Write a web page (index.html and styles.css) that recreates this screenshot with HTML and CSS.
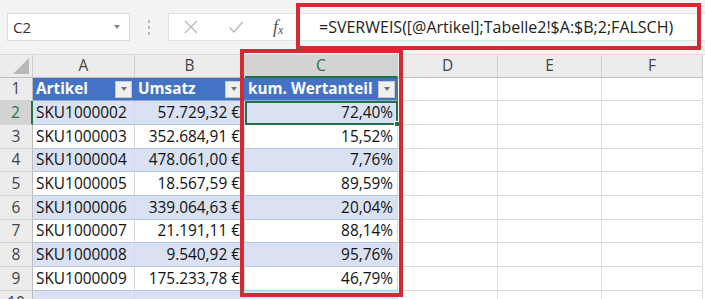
FILE: index.html
```html
<!DOCTYPE html>
<html lang="de">
<head>
<meta charset="utf-8">
<title>SVERWEIS</title>
<link rel="stylesheet" href="styles.css">
</head>
<body>
<div class="app">
  <div class="toolbar">
    <div class="namebox"><span class="nb-text">C2</span><span class="nb-arrow"></span></div>
    <div class="dots"><i></i><i></i><i></i></div>
    <div class="fbar">
      <div class="fbtns">
        <svg class="ico" width="16" height="16" viewBox="0 0 16 16"><path d="M2 2 L14 14 M14 2 L2 14" stroke="#b9b9b9" stroke-width="1.4" fill="none"/></svg>
        <svg class="ico" width="16" height="16" viewBox="0 0 16 16"><path d="M1.5 8.5 L6 13 L14.5 3" stroke="#b9b9b9" stroke-width="1.4" fill="none"/></svg>
        <span class="fx">f<span class="fx-x">x</span></span>
      </div>
      <div class="formula">=SVERWEIS([@Artikel];Tabelle2!$A:$B;2;FALSCH)</div>
    </div>
  </div>

  <div class="sheet">
    <div class="corner"><span class="tri"></span></div>
    <div class="ch">A</div><div class="ch">B</div><div class="ch sel">C</div><div class="ch">D</div><div class="ch">E</div><div class="ch">F</div>

    <div class="rh">1</div>
    <div class="th"><span>Artikel</span><span class="fbtn"></span></div>
    <div class="th"><span>Umsatz</span><span class="fbtn"></span></div>
    <div class="th thc"><span>kum. Wertanteil</span><span class="fbtn"></span></div>
    <div class="c"></div><div class="c"></div><div class="c"></div>

    <div class="rh sel">2</div>
    <div class="t b">SKU1000002</div><div class="t b num">57.729,32 €</div><div class="t b num active">72,40%<span class="handle"></span></div>
    <div class="c"></div><div class="c"></div><div class="c"></div>

    <div class="rh">3</div>
    <div class="t">SKU1000003</div><div class="t num">352.684,91 €</div><div class="t num">15,52%</div>
    <div class="c"></div><div class="c"></div><div class="c"></div>

    <div class="rh">4</div>
    <div class="t b">SKU1000004</div><div class="t b num">478.061,00 €</div><div class="t b num">7,76%</div>
    <div class="c"></div><div class="c"></div><div class="c"></div>

    <div class="rh">5</div>
    <div class="t">SKU1000005</div><div class="t num">18.567,59 €</div><div class="t num">89,59%</div>
    <div class="c"></div><div class="c"></div><div class="c"></div>

    <div class="rh">6</div>
    <div class="t b">SKU1000006</div><div class="t b num">339.064,63 €</div><div class="t b num">20,04%</div>
    <div class="c"></div><div class="c"></div><div class="c"></div>

    <div class="rh">7</div>
    <div class="t">SKU1000007</div><div class="t num">21.191,11 €</div><div class="t num">88,14%</div>
    <div class="c"></div><div class="c"></div><div class="c"></div>

    <div class="rh">8</div>
    <div class="t b">SKU1000008</div><div class="t b num">9.540,92 €</div><div class="t b num">95,76%</div>
    <div class="c"></div><div class="c"></div><div class="c"></div>

    <div class="rh">9</div>
    <div class="t">SKU1000009</div><div class="t num">175.233,78 €</div><div class="t num">46,79%</div>
    <div class="c"></div><div class="c"></div><div class="c"></div>

    <div class="rh">10</div>
    <div class="t b"></div><div class="t b"></div><div class="t b"></div>
    <div class="c"></div><div class="c"></div><div class="c"></div>
  </div>

  <div class="hl hl-formula"></div>
  <div class="hl hl-col"></div>
</div>
</body>
</html>
```

FILE: styles.css
```css
* { box-sizing: border-box; }
html, body { margin: 0; padding: 0; background: #fff; }
.app {
  position: relative;
  width: 705px;
  height: 299px;
  overflow: hidden;
  font-family: "Open Sans", "Noto Sans", sans-serif;
}

/* toolbar */
.toolbar {
  height: 55px;
  background: #f3f3f3;
  border-bottom: 1px solid #dcdcdc;
  display: flex;
  align-items: center;
  padding-left: 7px;
}
.namebox {
  width: 123px;
  height: 28px;
  background: #fff;
  border: 1px solid #dadada;
  display: flex;
  align-items: center;
  justify-content: space-between;
  padding: 0 9px 0 5px;
}
.nb-text { font-size: 15px; color: #333; }
.nb-arrow {
  width: 0; height: 0;
  border-left: 3.5px solid transparent;
  border-right: 3.5px solid transparent;
  border-top: 4px solid #8a8a8a;
}
.dots {
  width: 38px;
  display: flex;
  flex-direction: column;
  align-items: center;
  gap: 3px;
}
.dots i { display: block; width: 2px; height: 3px; background: #bdbdbd; }
.fbar {
  flex: 1;
  height: 28px;
  background: #fff;
  border: 1px solid #e2e2e2;
  border-right: none;
  display: flex;
  align-items: center;
}
.fbtns {
  width: 128px;
  display: flex;
  align-items: center;
  padding-left: 14px;
  gap: 29px;
}
.ico { display: block; }
.fx {
  font-family: "Liberation Serif", serif;
  font-style: italic;
  font-size: 18px;
  color: #555;
  line-height: 1;
}
.fx-x { font-size: 12px; position: relative; top: 1px; }
.formula {
  padding-left: 22px;
  font-size: 16px;
  color: #222;
  white-space: nowrap;
}

/* sheet */
.sheet {
  display: grid;
  grid-template-columns: 33px 102px 110px 153px 100px 104px 101px;
  grid-template-rows: 23px 23px 24px 24px 23px 24px 24px 23px 24px 24px 24px;
}
.sheet > div {
  border-right: 1px solid #dadada;
  border-bottom: 1px solid #dadada;
  font-size: 15px;
  line-height: 1;
  white-space: nowrap;
  display: flex;
  align-items: center;
  min-width: 0;
}
.sheet > .corner {
  background: #ececec;
  border-right: 1px solid #cfcfcf;
  border-bottom: 1px solid #bdbdbd;
  justify-content: flex-end;
  align-items: flex-end;
  padding: 0 3px 3px 0;
}
.tri {
  width: 0; height: 0;
  border-left: 16px solid transparent;
  border-bottom: 16px solid #b8b8b8;
}
.sheet > .ch {
  background: #ececec;
  border-right: 1px solid #d0d0d0;
  border-bottom: 1px solid #bdbdbd;
  justify-content: center;
  color: #444;
  font-size: 15.5px;
}
.sheet > .ch.sel {
  background: #d3d3d3;
  color: #217346;
  border-bottom: 2px solid #217346;
}
.sheet > .rh {
  background: #ececec;
  border-right: 1px solid #bdbdbd;
  border-bottom: 1px solid #d4d4d4;
  justify-content: center;
  color: #444;
  font-size: 15.5px;
}
.sheet > .rh.sel {
  background: #d3d3d3;
  color: #217346;
  border-right: 2px solid #217346;
}
.sheet > .th {
  background: #4472c4;
  color: #fff;
  font-weight: 700;
  border-right: 1px solid #4472c4;
  border-bottom: 1px solid #8ea9db;
  justify-content: space-between;
  padding: 0 2px 0 3px;
  font-size: 15.3px;
}
.fbtn {
  width: 17px;
  height: 17px;
  background: #f0f0f0;
  border: 1px solid #c8c8c8;
  display: flex;
  align-items: center;
  justify-content: center;
  flex: none;
}
.fbtn::after {
  content: "";
  width: 0; height: 0;
  border-left: 3.5px solid transparent;
  border-right: 3.5px solid transparent;
  border-top: 4px solid #707070;
}
.sheet > .t {
  background: #fff;
  color: #111;
  border-right: 1px solid #d6d6d6;
  border-bottom: 1px solid #b4c6e7;
  padding: 0 4px 0 3px;
  font-size: 15.4px;
}
.sheet > .t.b {
  background: #d9e1f2;
  border-right-color: #d2dbee;
}
.sheet > .num { justify-content: flex-end; }
.sheet > .active {
  position: relative;
  outline: 2px solid #217346;
  outline-offset: -2px;
}
.handle {
  position: absolute;
  right: -3px;
  bottom: -3px;
  width: 6px;
  height: 6px;
  background: #217346;
  border: 1px solid #fff;
}
.sheet > .c { background: #fff; }

/* red highlight frames */
.hl {
  position: absolute;
  border: 4px solid #d42a33;
  pointer-events: none;
}
.hl-formula { left: 296px; top: 3px; width: 405px; height: 47px; }
.hl-col { left: 240px; top: 49px; width: 163px; height: 248px; }
```
